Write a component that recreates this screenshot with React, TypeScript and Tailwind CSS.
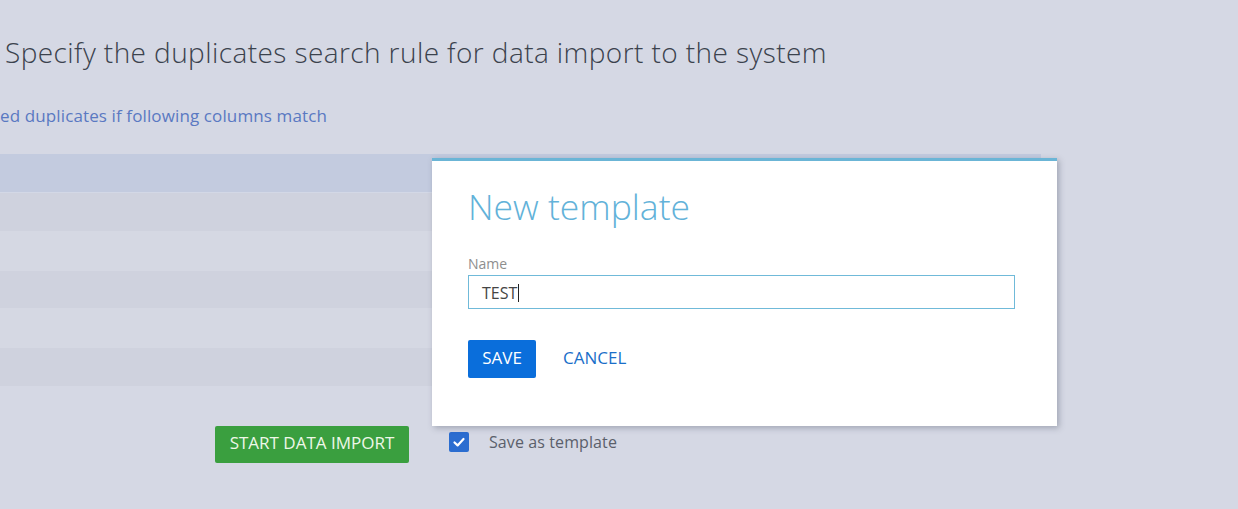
import React from "react";

const rows = [
  { h: "h-[39px]", bg: "bg-[#c3cbdf] border-b border-[#d3d8e6]" },
  { h: "h-[38px]", bg: "bg-[#cfd2de]" },
  { h: "h-[40px]", bg: "bg-[#d5d8e3]" },
  { h: "h-[37px]", bg: "bg-[#cfd2de]" },
  { h: "h-[40px]", bg: "bg-[#d5d8e3]" },
  { h: "h-[38px]", bg: "bg-[#cfd2de]" },
];

function CheckIcon() {
  return (
    <svg viewBox="0 0 20 20" className="h-[20px] w-[20px]">
      <rect x="0" y="0" width="20" height="20" rx="2" fill="#2b6dd0" />
      <path d="M5.5 10.5 L8.6 13.4 L14.5 7" fill="none" stroke="#fff" strokeWidth="2.2" strokeLinecap="round" strokeLinejoin="round" />
    </svg>
  );
}

export default function App() {
  return (
    <div className="relative h-[509px] w-[1238px] overflow-hidden bg-[#d5d8e4] font-['Open_Sans',sans-serif]">
      <h1 className="ml-[5px] mt-[34px] text-[28px] font-light leading-[36px] tracking-[0.42px] text-[#3b424d]">
        Specify the duplicates search rule for data import to the system
      </h1>
      <div className="mt-[34px] text-[17px] leading-[24px] tracking-[0.12px] text-[#5a79c2]">
        ed duplicates if following columns match
      </div>

      <div className="mt-[26px] w-[1041px]">
        {rows.map((r, i) => (
          <div key={i} className={`${r.h} ${r.bg}`} />
        ))}
      </div>

      <div className="mt-[40px] flex items-center">
        <button className="ml-[215px] h-[37px] w-[194px] rounded-[2px] bg-[#3a9f3f] pb-[3px] text-[17px] text-[#eef7e8]">
          START DATA IMPORT
        </button>
        <div className="mb-[5px] ml-[40px] flex items-center gap-[20px]">
          <CheckIcon />
          <span className="text-[16px] tracking-[0.1px] text-[#5b606b]">Save as template</span>
        </div>
      </div>

      {/* modal */}
      <div className="absolute left-[432px] top-[158px] h-[268px] w-[625px] border-t-[3px] border-[#6bb5d6] bg-white pl-[36px] pt-[25px] shadow-[2px_2px_6px_rgba(60,70,90,0.35)]">
        <div className="text-[35.5px] font-light leading-[40px] text-[#62b2d9]">New template</div>
        <div className="mt-[30px] text-[14px] leading-[16px] text-[#8e8e8e]">Name</div>
        <div className="mt-[3px] flex h-[34px] w-[547px] items-center border border-[#70bad9] pl-[13px] pt-[1px] text-[16px] text-[#454545]">
          <span>TEST</span>
          <span className="ml-[1px] h-[18px] w-[1px] bg-[#222]" />
        </div>
        <div className="mt-[31px] flex items-center gap-[27px]">
          <button className="h-[38px] w-[68px] rounded-[2px] bg-[#0a6edb] pb-[3px] text-[17px] text-white">SAVE</button>
          <button className="pb-[3px] text-[17px] text-[#1a6fc9]">CANCEL</button>
        </div>
      </div>
    </div>
  );
}
